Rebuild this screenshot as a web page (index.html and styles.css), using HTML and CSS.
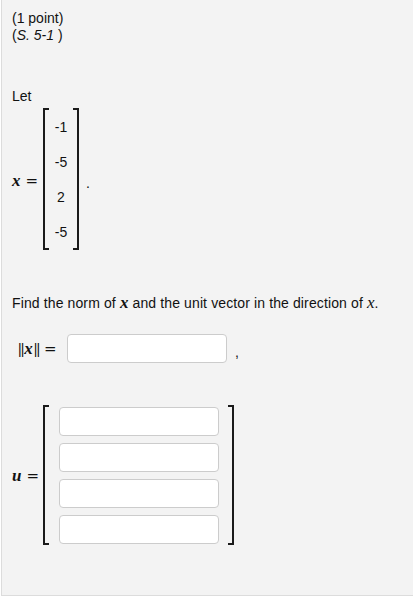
FILE: index.html
```html
<!DOCTYPE html>
<html>
<head>
<meta charset="utf-8">
<link rel="stylesheet" href="styles.css">
</head>
<body>
<div class="panel">
  <div class="head">
    <div>(1 point)</div>
    <div>(<i>S. 5-1</i> )</div>
  </div>
  <div class="let">Let</div>
  <div class="mrow xrow">
    <span class="lab"><span class="mv">x</span><span class="eq">=</span></span>
    <div class="matrix">
      <span class="br left"></span>
      <div class="col nums">
        <div class="cell">-1</div>
        <div class="cell">-5</div>
        <div class="cell">2</div>
        <div class="cell">-5</div>
      </div>
      <span class="br right"></span>
    </div>
    <span class="dot">.</span>
  </div>
  <div class="find">Find the norm of <span class="mv">x</span> and the unit vector in the direction of <span class="mi">x</span>.</div>
  <div class="normrow">
    <span class="normlab"><span class="bars">||</span><span class="mv">x</span><span class="bars">||</span><span class="eq">=</span></span>
    <input class="ans" type="text">
    <span class="comma">,</span>
  </div>
  <div class="mrow urow">
    <span class="lab"><span class="mv">u</span><span class="eq">=</span></span>
    <div class="matrix">
      <span class="br left"></span>
      <div class="col inputs">
        <input class="ans" type="text">
        <input class="ans" type="text">
        <input class="ans" type="text">
        <input class="ans" type="text">
      </div>
      <span class="br right"></span>
    </div>
  </div>
</div>
</body>
</html>
```
FILE: styles.css
```css
html, body {
  margin: 0;
  padding: 0;
  background: #ffffff;
}
body {
  font-family: "Liberation Sans", Arial, sans-serif;
  font-size: 14px;
  color: #111;
}
.panel {
  margin-left: 1px;
  background: #f3f3f3;
  border-left: 1px solid #dcdcdc;
  border-bottom: 1px solid #dcdcdc;
  height: 596px;
  box-sizing: border-box;
  padding: 10px 0 0 10px;
}
.head {
  line-height: 17px;
}
.let {
  margin-top: 44px;
  line-height: 17px;
}
.mrow {
  display: flex;
  align-items: center;
}
.xrow {
  margin-top: 3px;
}
.lab {
  width: 31px;
  display: flex;
  justify-content: flex-start;
  align-items: baseline;
  font-family: "Liberation Serif", serif;
  font-size: 17px;
  padding-top: 4px;
}
.mv {
  font-family: "Liberation Serif", serif;
  font-style: italic;
  font-weight: bold;
  font-size: 17px;
}
.mi {
  font-family: "Liberation Serif", serif;
  font-style: italic;
  font-size: 17px;
}
.eq {
  margin-left: 5px;
  font-family: "DejaVu Serif", serif;
  font-size: 15px;
}
.matrix {
  display: flex;
  align-items: stretch;
}
.br {
  width: 4px;
  border-top: 2px solid #1a1a1a;
  border-bottom: 2px solid #1a1a1a;
}
.br.left {
  border-left: 2px solid #1a1a1a;
}
.br.right {
  border-right: 2px solid #1a1a1a;
}
.nums {
  width: 24px;
  padding: 2px 0 0;
}
.cell {
  height: 35px;
  line-height: 35px;
  text-align: center;
}
.dot {
  margin-left: 7px;
  padding-top: 8px;
}
.find {
  margin-top: 44px;
  line-height: 17px;
  letter-spacing: 0.12px;
}
.normrow {
  display: flex;
  align-items: center;
  margin-top: 22px;
  padding-left: 6px;
}
.normlab {
  display: flex;
  align-items: baseline;
  width: 49px;
}
.bars {
  font-family: "Liberation Sans", sans-serif;
  font-size: 14px;
  letter-spacing: -1px;
}
.normlab .mv {
  margin: 0 1px 0 1px;
}
.ans {
  width: 160px;
  height: 29px;
  box-sizing: border-box;
  border: 1px solid #cccccc;
  border-radius: 4px;
  background: #ffffff;
  margin: 0;
  padding: 0 6px;
  font: inherit;
}
.comma {
  margin-left: 8px;
  padding-top: 6px;
}
.urow {
  margin-top: 42px;
}
.urow .lab {
  padding-top: 2px;
}
.inputs {
  display: flex;
  flex-direction: column;
  gap: 7px;
  padding: 2px 9px 1px 10px;
}
```
